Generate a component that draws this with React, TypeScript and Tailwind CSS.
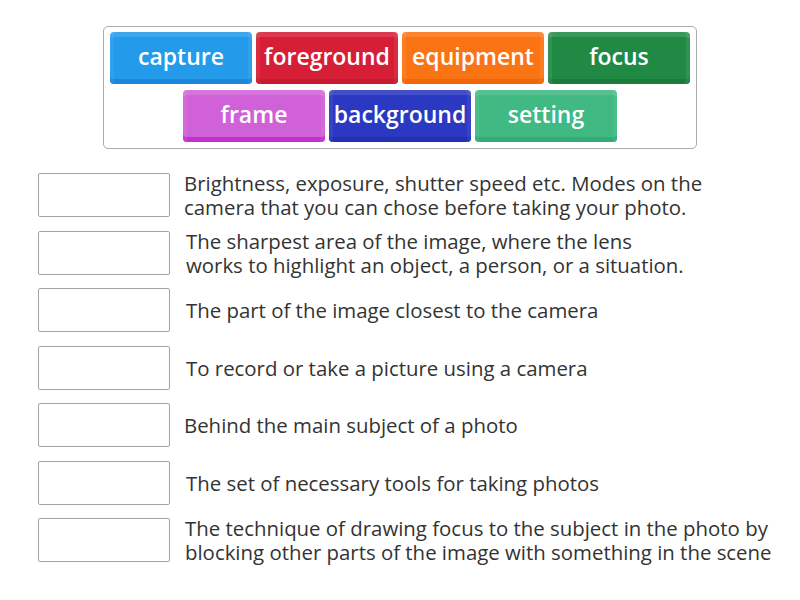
const tiles = [
  { label: "capture", cls: "bg-[#239bea] shadow-[inset_0_5px_0_rgba(255,255,255,0.12),inset_4px_0_0_rgba(255,255,255,0.06),inset_-4px_0_0_rgba(255,255,255,0.06),inset_0_-5px_0_#1b86da]" },
  { label: "foreground", cls: "bg-[#d61f36] shadow-[inset_0_5px_0_rgba(255,255,255,0.12),inset_4px_0_0_rgba(255,255,255,0.06),inset_-4px_0_0_rgba(255,255,255,0.06),inset_0_-5px_0_#c51a2f]" },
  { label: "equipment", cls: "bg-[#fb7414] shadow-[inset_0_5px_0_rgba(255,255,255,0.12),inset_4px_0_0_rgba(255,255,255,0.06),inset_-4px_0_0_rgba(255,255,255,0.06),inset_0_-5px_0_#ef660b]" },
  { label: "focus", cls: "bg-[#208a45] shadow-[inset_0_5px_0_rgba(255,255,255,0.12),inset_4px_0_0_rgba(255,255,255,0.08),inset_-4px_0_0_rgba(255,255,255,0.08),inset_0_-5px_0_#1b7b3c]" },
  { label: "frame", cls: "bg-[#d061d8] shadow-[inset_0_5px_0_rgba(255,255,255,0.12),inset_4px_0_0_rgba(255,255,255,0.06),inset_-4px_0_0_rgba(255,255,255,0.06),inset_0_-5px_0_#c52fcf]" },
  { label: "background", cls: "bg-[#2b38c2] shadow-[inset_0_5px_0_rgba(255,255,255,0.12),inset_4px_0_0_rgba(255,255,255,0.06),inset_-4px_0_0_rgba(255,255,255,0.06),inset_0_-5px_0_#2230b3]" },
  { label: "setting", cls: "bg-[#40b982] shadow-[inset_0_5px_0_rgba(255,255,255,0.12),inset_4px_0_0_rgba(255,255,255,0.06),inset_-4px_0_0_rgba(255,255,255,0.06),inset_0_-5px_0_#35ab76]" },
]

// pad = small left nudge each clue has in the original
const clues = [
  { pad: "ml-[14px]", lines: ["Brightness, exposure, shutter speed etc. Modes on the", "camera that you can chose before taking your photo."] },
  { pad: "ml-[16px]", lines: ["The sharpest area of the image, where the lens", "works to highlight an object, a person, or a situation."] },
  { pad: "ml-[16px]", lines: ["The part of the image closest to the camera"] },
  { pad: "ml-[16px]", lines: ["To record or take a picture using a camera"] },
  { pad: "ml-[14px]", lines: ["Behind the main subject of a photo"] },
  { pad: "ml-[16px]", lines: ["The set of necessary tools for taking photos"] },
  { pad: "ml-[15px]", lines: ["The technique of drawing focus to the subject in the photo by", "blocking other parts of the image with something in the scene"] },
]

export default function App() {
  return (
    <div className="min-h-[600px] w-[800px] bg-white pt-[26px] font-['Open_Sans',sans-serif]">
      {/* word bank */}
      <div className="mx-auto flex w-[594px] flex-wrap justify-center gap-x-1 gap-y-[6px] rounded-[5px] border border-[#ababab] px-[6px] pb-[6px] pt-[5px]">
        {tiles.map((t) => (
          <div
            key={t.label}
            className={`flex h-[52px] w-[142px] items-center justify-center rounded-[4px] text-[23px] font-semibold text-white ${t.cls}`}
          >
            <span className="-mt-[4px]">{t.label}</span>
          </div>
        ))}
      </div>

      {/* answer rows */}
      <div className="mt-[24px] flex flex-col gap-[13.5px] pl-[38px]">
        {clues.map((c, i) => (
          <div key={i} className="flex h-[44px] items-center">
            <div className="h-[44px] w-[132px] shrink-0 rounded-[2px] border border-[#a3a3a3] bg-white" />
            <div className={`${c.pad} text-[20.4px] leading-[24px] text-[#333333]`}>
              {c.lines.map((l) => (
                <div key={l} className="whitespace-nowrap">{l}</div>
              ))}
            </div>
          </div>
        ))}
      </div>
    </div>
  )
}
